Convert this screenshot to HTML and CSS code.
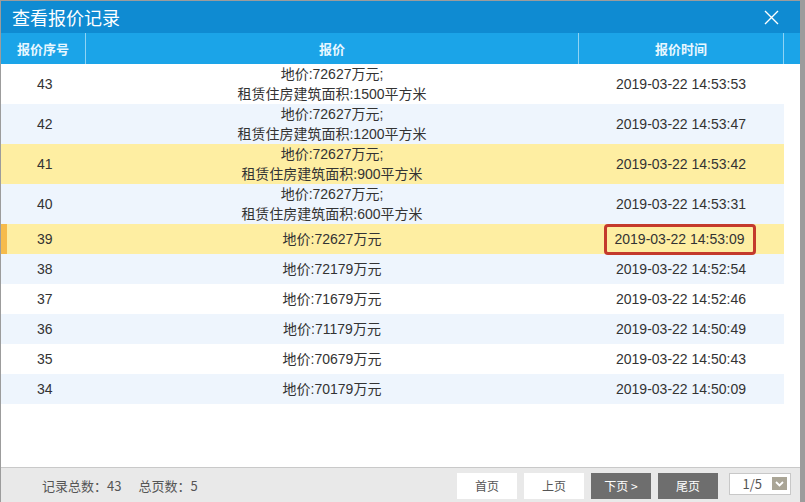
FILE: index.html
```html
<!DOCTYPE html>
<html lang="zh-CN">
<head>
    <meta charset="UTF-8">
    <title>查看报价记录</title>
    <link rel="stylesheet" href="styles.css">
</head>
<body>
    <div class="dialog">
        <div class="titlebar">
            <span class="title">查看报价记录</span>
            <svg class="close" width="15" height="15" viewBox="0 0 15 15">
                <path d="M1 1 L14 14 M14 1 L1 14" stroke="#fff" stroke-width="1.4" fill="none"/>
            </svg>
        </div>
        <div class="grid">
            <table class="records">
                <thead>
                    <tr>
                        <th class="c-no">报价序号</th>
                        <th class="c-price">报价</th>
                        <th class="c-time">报价时间</th>
                        <th class="c-gap"></th>
                    </tr>
                </thead>
                <tbody>
                    <tr class="tall">
                        <td>43</td>
                        <td>地价:72627万元;<br>租赁住房建筑面积:1500平方米</td>
                        <td>2019-03-22 14:53:53</td>
                        <td class="c-gap"></td>
                    </tr>
                    <tr class="tall alt">
                        <td>42</td>
                        <td>地价:72627万元;<br>租赁住房建筑面积:1200平方米</td>
                        <td>2019-03-22 14:53:47</td>
                        <td class="c-gap"></td>
                    </tr>
                    <tr class="tall hl">
                        <td>41</td>
                        <td>地价:72627万元;<br>租赁住房建筑面积:900平方米</td>
                        <td>2019-03-22 14:53:42</td>
                        <td class="c-gap"></td>
                    </tr>
                    <tr class="tall alt">
                        <td>40</td>
                        <td>地价:72627万元;<br>租赁住房建筑面积:600平方米</td>
                        <td>2019-03-22 14:53:31</td>
                        <td class="c-gap"></td>
                    </tr>
                    <tr class="hl current">
                        <td class="marker">39</td>
                        <td>地价:72627万元</td>
                        <td><span class="boxed">2019-03-22 14:53:09</span></td>
                        <td class="c-gap"></td>
                    </tr>
                    <tr class="alt">
                        <td>38</td>
                        <td>地价:72179万元</td>
                        <td>2019-03-22 14:52:54</td>
                        <td class="c-gap"></td>
                    </tr>
                    <tr>
                        <td>37</td>
                        <td>地价:71679万元</td>
                        <td>2019-03-22 14:52:46</td>
                        <td class="c-gap"></td>
                    </tr>
                    <tr class="alt">
                        <td>36</td>
                        <td>地价:71179万元</td>
                        <td>2019-03-22 14:50:49</td>
                        <td class="c-gap"></td>
                    </tr>
                    <tr>
                        <td>35</td>
                        <td>地价:70679万元</td>
                        <td>2019-03-22 14:50:43</td>
                        <td class="c-gap"></td>
                    </tr>
                    <tr class="alt">
                        <td>34</td>
                        <td>地价:70179万元</td>
                        <td>2019-03-22 14:50:09</td>
                        <td class="c-gap"></td>
                    </tr>
                </tbody>
            </table>
        </div>
        <div class="footer">
            <div class="summary">
                <span>记录总数：43</span>
                <span>总页数：5</span>
            </div>
            <div class="pager">
                <button class="pg">首页</button>
                <button class="pg">上页</button>
                <button class="pg dark">下页 &gt;</button>
                <button class="pg dark">尾页</button>
                <div class="page-select">
                    <span>1/5</span>
                    <span class="arrow">
                        <svg width="9" height="6" viewBox="0 0 9 6">
                            <path d="M1 1 L4.5 4.5 L8 1" stroke="#fff" stroke-width="1.8" fill="none"/>
                        </svg>
                    </span>
                </div>
            </div>
        </div>
    </div>
</body>
</html>
```

FILE: styles.css
```css
body {
    margin: 0;
    padding: 1px 0 0 1px;
    height: 100vh;
    box-sizing: border-box;
    background: #9c9c9c;
    font-family: "Liberation Sans", "Noto Sans CJK SC", sans-serif;
    color: #333;
    overflow: hidden;
}
.dialog {
    width: 799px;
    height: 501px;
    background: #fff;
    display: flex;
    flex-direction: column;
}
.titlebar {
    height: 32px;
    background: #0f8bd2;
    display: flex;
    align-items: center;
    justify-content: space-between;
    padding: 0 21px 0 11px;
    flex-shrink: 0;
}
.title {
    color: #fff;
    font-size: 18px;
    font-family: "Noto Sans CJK SC", sans-serif;
}
.grid {
    flex: 1;
}
.records {
    border-collapse: collapse;
    width: 100%;
    table-layout: fixed;
    font-size: 14px;
}
.records th {
    height: 31px;
    padding: 0;
    background: #1ba4e8;
    color: #e8f7ff;
    font-size: 13px;
    font-weight: bold;
    font-family: "Noto Sans CJK SC", sans-serif;
    border-right: 1px solid #8fd3f4;
}
.records th:last-child {
    border-right: none;
}
.c-no { width: 84px; }
.c-price { width: 492px; }
.c-time { width: 204px; }
.records td {
    height: 30px;
    padding: 0;
    text-align: center;
    line-height: 20px;
}
.records tr.tall td {
    height: 40px;
}
.records td:first-child {
    padding-left: 3px;
}
.records tr.alt td {
    background: #eef5fd;
}
.records tr.hl td {
    background: #feeea2;
}
.records td.c-gap,
.records tr.alt td.c-gap,
.records tr.hl td.c-gap {
    background: #fff;
}
.records td.marker {
    box-shadow: inset 6px 0 0 #f6bb4c;
}
.boxed {
    display: inline-block;
    box-sizing: border-box;
    height: 31px;
    line-height: 25px;
    margin: -1px 0 -1px -3px;
    padding: 0 8px;
    border: 3px solid #c43a2c;
    border-radius: 4px;
}
.footer {
    height: 34px;
    flex-shrink: 0;
    background: #e9e9e9;
    border-top: 1px solid #c9c9c9;
    display: flex;
    align-items: center;
    justify-content: space-between;
    padding: 0 9px 0 41px;
    font-family: "Noto Sans CJK SC", sans-serif;
    font-size: 13px;
    color: #555;
}
.summary {
    display: flex;
    gap: 17px;
}
.pager {
    display: flex;
    align-items: center;
    gap: 7px;
    margin-top: 1px;
}
.pg {
    width: 60px;
    height: 26px;
    border: none;
    background: #fff;
    color: #555;
    font-family: "Noto Sans CJK SC", sans-serif;
    font-size: 12px;
    padding: 0;
}
.pg.dark {
    background: #6e6e6e;
    color: #fff;
}
.page-select {
    width: 62px;
    height: 22px;
    box-sizing: border-box;
    margin-left: 4px;
    margin-top: -4px;
    background: #fff;
    border: 1px solid #c8c8c8;
    display: flex;
    align-items: center;
    justify-content: flex-end;
    gap: 10px;
    padding-right: 3px;
    font-size: 13px;
    color: #555;
}
.arrow {
    width: 15px;
    height: 13px;
    background: #aaa596;
    display: flex;
    align-items: center;
    justify-content: center;
}
```
